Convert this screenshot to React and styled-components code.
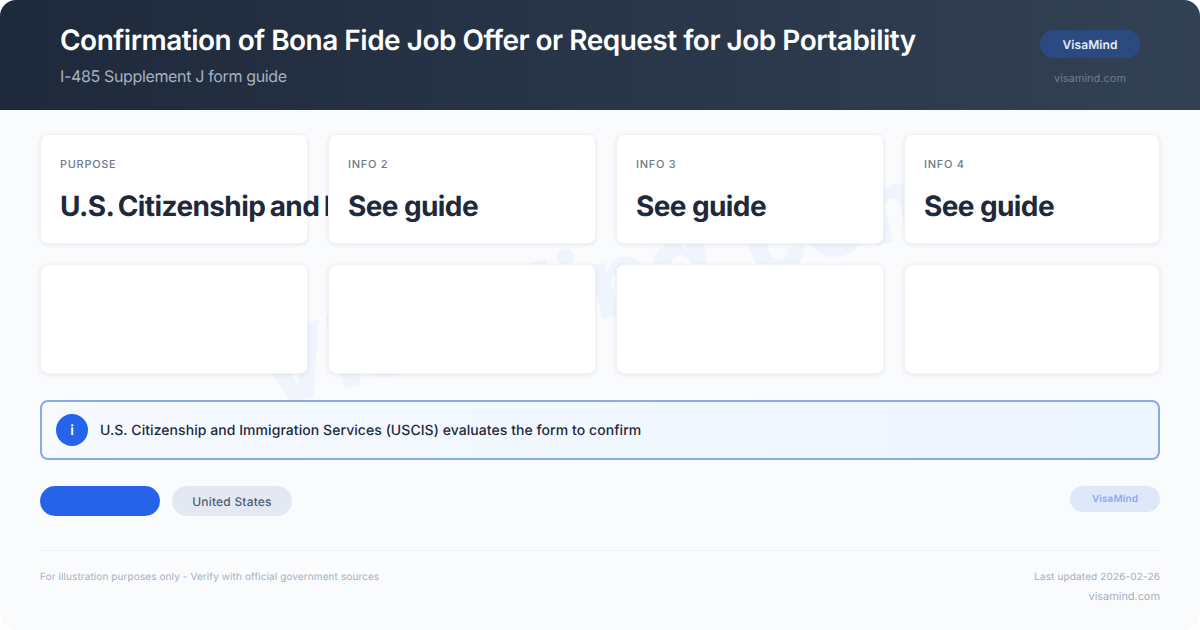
import React from "react";
import styled, { createGlobalStyle } from "styled-components";

const Global = createGlobalStyle`
  html, body { margin: 0; padding: 0; background: #ffffff; }
  body { font-family: Inter, "Liberation Sans", sans-serif; text-rendering: geometricPrecision; }
`;

const Page = styled.div`
  position: relative;
  width: 1200px;
  height: 630px;
  overflow: hidden;
  border-radius: 16px;
  background: #f9fbfd;
  display: flex;
  flex-direction: column;
`;

const Watermark = styled.div`
  position: absolute;
  left: 604px;
  top: 172px;
  transform: translate(-50%, -50%) rotate(-15deg);
  font-size: 100px;
  font-weight: 800;
  white-space: nowrap;
  color: rgba(37, 99, 235, 0.045);
`;

const Header = styled.header`
  position: relative;
  height: 110px;
  flex: none;
  box-sizing: border-box;
  padding: 0 60px;
  background: linear-gradient(90deg, #1e293b, #334155);
  display: flex;
  justify-content: space-between;
  align-items: center;
`;

const HeadText = styled.div`
  display: flex;
  flex-direction: column;
  gap: 10px;
`;

const Title = styled.h1`
  margin: 0;
  font-size: 28px;
  line-height: 32px;
  font-weight: 600;
  letter-spacing: -0.51px;
  color: #ffffff;
`;

const Subtitle = styled.p`
  margin: 0;
  font-size: 16px;
  line-height: 20px;
  font-weight: 400;
  letter-spacing: -0.35px;
  color: #a7b1c0;
`;

const Brand = styled.div`
  display: flex;
  flex-direction: column;
  align-items: center;
  gap: 13px;
  width: 100px;
  padding-top: 5px;
`;

const BrandPill = styled.div`
  width: 100px;
  height: 28px;
  border-radius: 14px;
  background: #2c4a82;
  color: #e6edf8;
  font-size: 12px;
  font-weight: 600;
  letter-spacing: 0.1px;
  display: flex;
  align-items: center;
  justify-content: center;
`;

const BrandUrl = styled.div`
  font-size: 11px;
  line-height: 14px;
  color: #6f7d91;
`;

const Main = styled.main`
  position: relative;
  flex: 1;
  box-sizing: border-box;
  padding: 24px 40px 0;
  display: flex;
  flex-direction: column;
`;

const Grid = styled.div`
  position: relative;
  display: grid;
  grid-template-columns: 268px 268px 268px 256px;
  grid-auto-rows: 110px;
  gap: 20px;
`;

const Card = styled.div`
  position: relative;
  box-sizing: border-box;
  padding: 20px 19px;
  background: #ffffff;
  border: 1px solid rgba(226, 232, 240, 0.5);
  border-radius: 8px;
  box-shadow: 0 1px 4px rgba(15, 23, 42, 0.09);
  min-width: 0;
`;

const CardLabel = styled.div`
  font-size: 11px;
  line-height: 18px;
  font-weight: 500;
  letter-spacing: 0.7px;
  color: #6b7a90;
`;

const CardValue = styled.div`
  margin-top: 15px;
  font-size: 28px;
  line-height: 36px;
  font-weight: 700;
  letter-spacing: -0.6px;
  word-spacing: ${(p) => (p.$tight ? "-1.6px" : "0")};
  color: #1e293b;
  white-space: nowrap;
`;

const Callout = styled.div`
  position: relative;
  margin-top: 26px;
  height: 60px;
  box-sizing: border-box;
  padding: 0 14px;
  border: 2px solid #8aabe2;
  border-radius: 8px;
  background: linear-gradient(90deg, #f6faff, #edf5ff);
  display: flex;
  align-items: center;
  gap: 12px;
`;

const InfoDot = styled.div`
  width: 32px;
  height: 32px;
  border-radius: 50%;
  background: #2563eb;
  color: #ffffff;
  font-size: 14px;
  font-weight: 600;
  display: flex;
  align-items: center;
  justify-content: center;
`;

const CalloutText = styled.div`
  font-size: 14px;
  font-weight: 500;
  letter-spacing: 0.06px;
  color: #1e293b;
`;

const TagRow = styled.div`
  position: relative;
  margin-top: 26px;
  display: flex;
  align-items: flex-start;
  gap: 12px;
`;

const Tag = styled.div`
  width: 120px;
  height: 30px;
  border-radius: 15px;
  background: ${(p) => (p.$primary ? "#2563eb" : "#e4e9f1")};
  color: #4f5d72;
  font-size: 12px;
  font-weight: 500;
  letter-spacing: 0.2px;
  display: flex;
  align-items: center;
  justify-content: center;
`;

const MiniBrand = styled.div`
  margin-left: auto;
  width: 90px;
  height: 26px;
  border-radius: 13px;
  background: #dfe8f8;
  color: #8aaaf0;
  font-size: 10px;
  font-weight: 600;
  letter-spacing: 0.1px;
  display: flex;
  align-items: center;
  justify-content: center;
`;

const Footer = styled.footer`
  position: relative;
  margin-top: 34px;
  border-top: 1px solid #f0f4f8;
  padding-top: 17px;
  display: flex;
  justify-content: space-between;
  align-items: flex-start;
  font-size: 10px;
  line-height: 19px;
  letter-spacing: 0.1px;
  color: #a6b0c0;
`;

const FootNote = styled.div``;

const FootRight = styled.div`
  text-align: right;
  letter-spacing: 0.14px;
`;

const FootUrl = styled.div`
  font-size: 11px;
  letter-spacing: -0.05px;
  line-height: 19px;
`;

const infos = [
  ["PURPOSE", "U.S. Citizenship and Immigration"],
  ["INFO 2", "See guide"],
  ["INFO 3", "See guide"],
  ["INFO 4", "See guide"],
];

export default function App() {
  return (
    <Page>
      <Global />
      <Header>
        <HeadText>
          <Title>Confirmation of Bona Fide Job Offer or Request for Job Portability</Title>
          <Subtitle>I-485 Supplement J form guide</Subtitle>
        </HeadText>
        <Brand>
          <BrandPill>VisaMind</BrandPill>
          <BrandUrl>visamind.com</BrandUrl>
        </Brand>
      </Header>
      <Main>
        <Watermark>VisaMind.com</Watermark>
        <Grid>
          {infos.map(([l, v], i) => (
            <Card key={l}>
              <CardLabel>{l}</CardLabel>
              <CardValue $tight={i === 0}>{v}</CardValue>
            </Card>
          ))}
          {[0, 1, 2, 3].map((i) => (
            <Card key={i} />
          ))}
        </Grid>
        <Callout>
          <InfoDot>i</InfoDot>
          <CalloutText>U.S. Citizenship and Immigration Services (USCIS) evaluates the form to confirm</CalloutText>
        </Callout>
        <TagRow>
          <Tag $primary />
          <Tag>United States</Tag>
          <MiniBrand>VisaMind</MiniBrand>
        </TagRow>
        <Footer>
          <FootNote>For illustration purposes only - Verify with official government sources</FootNote>
          <FootRight>
            <div>Last updated 2026-02-26</div>
            <FootUrl>visamind.com</FootUrl>
          </FootRight>
        </Footer>
      </Main>
    </Page>
  );
}
